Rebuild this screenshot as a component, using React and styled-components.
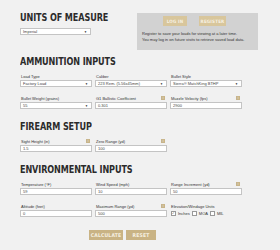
import styled, { createGlobalStyle } from 'styled-components';

const Global = createGlobalStyle`
  html, body {
    margin: 0;
    padding: 0;
    background: #f1f1f1;
  }
  body {
    font-family: "Liberation Sans", Arial, sans-serif;
    color: #333;
  }
`;

const Page = styled.div`
  width: 280px;
  height: 250px;
  box-sizing: border-box;
  padding: 13px 0 0 20px;
  overflow: hidden;
`;

const Top = styled.div`
  display: flex;
  justify-content: space-between;
  width: 238px;
`;

const UnitsCol = styled.div`
  display: flex;
  flex-direction: column;
`;

const Title = styled.h2`
  margin: ${p => p.$top || 0}px 0 0 0;
  font-family: "Liberation Sans Narrow", "DejaVu Sans Condensed", sans-serif;
  font-weight: bold;
  font-size: 9px;
  line-height: 9px;
  height: 9px;
  color: #2b2b2b;
  letter-spacing: -0.1px;
  transform: scaleY(1.25);
  transform-origin: left center;
`;

const Panel = styled.div`
  width: 121px;
  height: 37px;
  background: #d2d2d2;
  box-sizing: border-box;
  padding: 3px 3px 0 5px;
  display: flex;
  flex-direction: column;
`;

const PanelButtons = styled.div`
  display: flex;
  gap: 12px;
  padding-left: 21px;
  margin-bottom: 5px;
`;

const TanButton = styled.button`
  width: ${p => p.$w}px;
  height: ${p => p.$h || 10}px;
  padding: 0;
  border: none;
  background: ${p => p.$bg || '#d8c69c'};
  color: #f7f1e2;
  font-family: "Liberation Sans Narrow", "DejaVu Sans Condensed", sans-serif;
  font-weight: bold;
  font-size: ${p => p.$fs || 4.5}px;
  letter-spacing: 0.2px;
  text-transform: uppercase;
  cursor: pointer;
`;

const PanelText = styled.p`
  margin: 0;
  font-size: 4px;
  line-height: 6px;
  color: #333;
  white-space: nowrap;
`;

const Select = styled.div`
  width: ${p => p.$w || 72}px;
  height: 7px;
  box-sizing: border-box;
  border: 1px solid #c4c4c4;
  background: #fff;
  display: flex;
  align-items: center;
  justify-content: space-between;
  padding: 0 3px 0 2px;
  font-size: 4px;
  color: #444;
  margin-top: ${p => p.$top || 0}px;
  overflow: hidden;
  white-space: nowrap;
`;

const Arrow = styled.span`
  font-size: 3px;
  color: #222;
`;

const Grid = styled.div`
  display: grid;
  grid-template-columns: 72px 72px 72px;
  column-gap: 3px;
  row-gap: 8px;
  margin-top: ${p => p.$top || 0}px;
`;

const Field = styled.div`
  display: flex;
  flex-direction: column;
  gap: 1px;
`;

const LabelRow = styled.div`
  display: flex;
  justify-content: space-between;
  align-items: flex-end;
  height: 6px;
  padding-left: 1px;
`;

const Label = styled.span`
  font-size: 4px;
  line-height: 5px;
  color: #333;
  white-space: nowrap;
`;

const Info = styled.span`
  width: 4px;
  height: 4px;
  background: #c7b48a;
  color: #fff;
  font-size: 3px;
  line-height: 4px;
  text-align: center;
  margin-right: 2px;
  margin-bottom: 1px;
`;

const Input = styled.div`
  width: 100%;
  height: 7px;
  box-sizing: border-box;
  border: 1px solid #c4c4c4;
  background: #fff;
  font-size: 4px;
  line-height: 5px;
  padding-left: 2px;
  color: #444;
`;

const Checks = styled.div`
  display: flex;
  align-items: center;
  gap: 2px;
  height: 7px;
  font-size: 4px;
  padding-left: 1px;
`;

const Box = styled.span`
  width: 3px;
  height: 3px;
  border: 0.5px solid #999;
  background: #fff;
  font-size: 3px;
  line-height: 3px;
  text-align: center;
  color: #222;
`;

const Actions = styled.div`
  display: flex;
  gap: 3px;
  padding-left: 69px;
  margin-top: 13px;
`;

const SelectField = ({ label, value, info }) => (
  <Field>
    <LabelRow>
      <Label>{label}</Label>
      {info && <Info>i</Info>}
    </LabelRow>
    <Select>
      <span>{value}</span>
      <Arrow>▼</Arrow>
    </Select>
  </Field>
);

const TextField = ({ label, value, info }) => (
  <Field>
    <LabelRow>
      <Label>{label}</Label>
      {info && <Info>i</Info>}
    </LabelRow>
    <Input>{value}</Input>
  </Field>
);

export default function App() {
  return (
    <Page>
      <Global />
      <Top>
        <UnitsCol>
          <Title>UNITS OF MEASURE</Title>
          <Select $top={6} $w={71}>
            <span>Imperial</span>
            <Arrow>▼</Arrow>
          </Select>
        </UnitsCol>
        <Panel>
          <PanelButtons>
            <TanButton $w={24}>Log In</TanButton>
            <TanButton $w={27}>Register</TanButton>
          </PanelButtons>
          <PanelText>Register to save your loads for viewing at a later time.</PanelText>
          <PanelText>You may log in on future visits to retrieve saved load data.</PanelText>
        </Panel>
      </Top>

      <Title $top={7}>AMMUNITION INPUTS</Title>
      <Grid $top={7}>
        <SelectField label="Load Type" value="Factory Load" />
        <SelectField label="Caliber" value="223 Rem. (5.56x45mm)" />
        <SelectField label="Bullet Style" value="Sierra® MatchKing BTHP" />
        <SelectField label="Bullet Weight (grains)" value="55" />
        <TextField label="G1 Ballistic Coefficient" value="0.301" info />
        <TextField label="Muzzle Velocity (fps)" value="2900" info />
      </Grid>

      <Title $top={13}>FIREARM SETUP</Title>
      <Grid $top={7}>
        <TextField label="Sight Height (in)" value="1.5" info />
        <TextField label="Zero Range (yd)" value="100" info />
      </Grid>

      <Title $top={13}>ENVIRONMENTAL INPUTS</Title>
      <Grid $top={7}>
        <TextField label="Temperature (°F)" value="59" />
        <TextField label="Wind Speed (mph)" value="10" />
        <TextField label="Range Increment (yd)" value="50" info />
        <TextField label="Altitude (feet)" value="0" />
        <TextField label="Maximum Range (yd)" value="500" info />
        <Field>
          <LabelRow>
            <Label>Elevation/Windage Units</Label>
          </LabelRow>
          <Checks>
            <Box>✓</Box>Inches <Box /> MOA <Box /> MIL
          </Checks>
        </Field>
      </Grid>

      <Actions>
        <TanButton $w={34} $bg="#c9b384" $fs={5}>Calculate</TanButton>
        <TanButton $w={30} $bg="#c9b384" $fs={5}>Reset</TanButton>
      </Actions>
    </Page>
  );
}
